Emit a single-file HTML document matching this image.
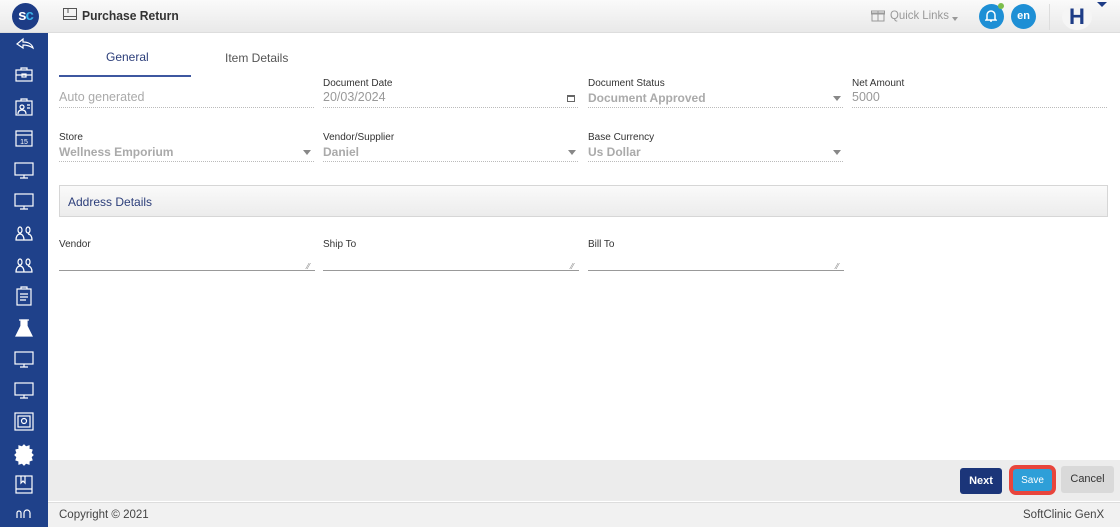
<!DOCTYPE html><html><head><style>
*{box-sizing:border-box;margin:0;padding:0}
body{width:1120px;height:527px;overflow:hidden;font-family:"Liberation Sans",sans-serif;background:#fff;position:relative}
.a{position:absolute}
.hdr{left:0;top:0;width:1120px;height:33px;background:linear-gradient(#fafafa,#e9e9e9);border-bottom:1px solid #ddd}
.side{left:0;top:33px;width:48px;height:494px;background:#1f418a}
.lbl{font-size:10px;color:#333}
.val{font-size:13px;color:#999}
.b{font-weight:bold;color:#aaa}
.dl{border-bottom:1px dotted #bbb;height:1px}
.car{width:0;height:0;border-left:4px solid transparent;border-right:4px solid transparent;border-top:5px solid #888}
</style></head><body>
<div class="a hdr"></div>
<div class="a" style="left:12px;top:3px;width:27px;height:27px;border-radius:50%;background:#1d3c86;color:#fff;font-weight:bold;font-size:15px;line-height:26px;text-align:center;letter-spacing:-1px">s<span style="color:#3ab0e8">c</span></div>
<svg class="a" style="left:63px;top:8px" width="14" height="12" viewBox="0 0 14 12"><rect x="0.5" y="0.5" width="13" height="11" fill="none" stroke="#555"/><line x1="0.5" y1="8.5" x2="13.5" y2="8.5" stroke="#555"/><line x1="5" y1="0.5" x2="5" y2="5" stroke="#555"/></svg>
<div class="a" style="left:82px;top:8px;font-size:13px;font-weight:bold;color:#333;transform:scaleX(.93);transform-origin:left">Purchase Return</div>
<svg class="a" style="left:871px;top:8px" width="14" height="14" viewBox="0 0 14 14"><rect x="1" y="5" width="12" height="8" fill="none" stroke="#999"/><rect x="0.5" y="3" width="13" height="3" fill="none" stroke="#999"/><line x1="7" y1="3" x2="7" y2="13" stroke="#999"/></svg>
<div class="a" style="left:890px;top:8px;font-size:12px;color:#999;transform:scaleX(.95);transform-origin:left">Quick Links</div>
<div class="a car" style="left:952px;top:17px;border-top-color:#999;border-width:4px 3px 0"></div>
<div class="a" style="left:979px;top:4px;width:25px;height:25px;border-radius:50%;background:#1e8fd5"></div>
<svg class="a" style="left:985px;top:9px" width="12" height="14" viewBox="0 0 12 14"><path d="M2 10V6a4 4 0 0 1 8 0v4l1 1H1z M5 12h2" fill="none" stroke="#fff" stroke-width="1.5"/></svg>
<div class="a" style="left:998px;top:3px;width:6px;height:6px;border-radius:50%;background:#7cbd4b"></div>
<div class="a" style="left:1011px;top:4px;width:25px;height:25px;border-radius:50%;background:#1e8fd5;color:#fff;font-size:11px;font-weight:bold;line-height:25px;text-align:center">en</div>
<div class="a" style="left:1049px;top:4px;width:1px;height:26px;background:#ddd"></div>
<div class="a" style="left:1062px;top:4px;width:30px;height:26px;border-radius:50%;background:#f5f5f5;color:#1d3c86;font-weight:bold;font-size:22px;line-height:26px;text-align:center">H</div>
<div class="a car" style="left:1097px;top:2px;border-top-color:#1d3c86;border-width:5px 5px 0"></div>
<div class="a side"></div>
<svg class="a" style="left:0;top:33px" width="48" height="494" viewBox="0 33 48 494" fill="none" stroke="#fff" stroke-width="1.2">
<path d="M17 44l6-5v3c5 0 9 2 10 6-3-2-6-3-10-3v3z"/>
<rect x="16" y="70" width="16" height="11"/><path d="M21 70v-2h6v2M16 75h16"/><rect x="22" y="74" width="4" height="3"/>
<rect x="16" y="101" width="16" height="14"/><path d="M21 101v-2h6v2M18 114c0-3 2-4 4-4s4 1 4 4M20 107a2 2 0 1 0 4 0a2 2 0 1 0-4 0M27 105h3M27 108h3"/>
<rect x="16" y="131" width="16" height="15"/><path d="M16 135h16"/><text x="24" y="144" font-size="7" fill="#fff" stroke="none" text-anchor="middle">15</text>
<rect x="15" y="163" width="18" height="12"/><path d="M24 175v3M20 178h8"/>
<rect x="15" y="194" width="18" height="12"/><path d="M24 206v3M20 209h8"/>
<path d="M16 240c0-4 2-6 4-6 2 0 4 2 4 6zM24 240h8c0-4-2-6-4-6M18 230a2 3 0 1 0 4 0a2 3 0 1 0-4 0M26 230a2 3 0 1 0 4 0a2 3 0 1 0-4 0"/>
<path d="M16 272c0-4 2-6 4-6 2 0 4 2 4 6zM24 272h8c0-4-2-6-4-6M18 262a2 3 0 1 0 4 0a2 3 0 1 0-4 0M26 262a2 3 0 1 0 4 0a2 3 0 1 0-4 0"/>
<rect x="17" y="289" width="14" height="16"/><path d="M21 289v-2h6v2M20 294h8M20 297h8M20 300h6"/>
<path d="M21 320v6l-5 10h16l-5-10v-6z" fill="#fff"/><path d="M19 320h10"/>
<rect x="15" y="352" width="18" height="12"/><path d="M24 364v3M20 367h8"/>
<rect x="15" y="383" width="18" height="12"/><path d="M24 395v3M20 398h8"/>
<rect x="15" y="413" width="18" height="17"/><rect x="18" y="416" width="12" height="11"/><circle cx="24" cy="421" r="2.5"/>
<path d="M24 445l2 2 3-1 0 3 3 1-1 3 2 2-2 2 1 3-3 1 0 3-3-1-2 2-2-2-3 1 0-3-3-1 1-3-2-2 2-2-1-3 3-1 0-3 3 1z" fill="#fff"/>
<rect x="16" y="476" width="16" height="17"/><path d="M16 489h16M21 476v7l2-2 2 2v-7"/>
<path d="M17 518v-5a2 2 0 0 1 4 0v5M24 518v-5a3 3 0 0 1 6 0v5" /></svg>
<div class="a" style="left:106px;top:50px;font-size:12px;color:#2c3e7a">General</div>
<div class="a" style="left:59px;top:75px;width:132px;height:2px;background:#3e57a0"></div>
<div class="a" style="left:225px;top:51px;font-size:12px;color:#555">Item Details</div>
<div class="a val" style="left:59px;top:90px;color:#aaa;font-size:12.5px">Auto generated</div>
<div class="a dl" style="left:59px;top:107px;width:255px"></div>
<div class="a lbl" style="left:323px;top:78px">Document Date</div>
<div class="a val" style="left:323px;top:90px;font-size:12.5px">20/03/2024</div>
<div class="a" style="left:567px;top:95px;width:8px;height:7px;border:1px solid #666;border-top-width:2px"></div>
<div class="a dl" style="left:323px;top:107px;width:255px"></div>
<div class="a lbl" style="left:588px;top:78px">Document Status</div>
<div class="a val b" style="left:588px;top:91px;font-size:12px">Document Approved</div>
<div class="a car" style="left:833px;top:96px"></div>
<div class="a dl" style="left:588px;top:107px;width:255px"></div>
<div class="a lbl" style="left:852px;top:78px">Net Amount</div>
<div class="a val" style="left:852px;top:90px;font-size:12.5px">5000</div>
<div class="a dl" style="left:852px;top:107px;width:255px"></div>
<div class="a lbl" style="left:59px;top:132px">Store</div>
<div class="a val b" style="left:59px;top:145px;font-size:12px">Wellness Emporium</div>
<div class="a car" style="left:303px;top:150px"></div>
<div class="a dl" style="left:59px;top:161px;width:255px"></div>
<div class="a lbl" style="left:323px;top:132px">Vendor/Supplier</div>
<div class="a val b" style="left:323px;top:145px;font-size:12px">Daniel</div>
<div class="a car" style="left:568px;top:150px"></div>
<div class="a dl" style="left:323px;top:161px;width:255px"></div>
<div class="a lbl" style="left:588px;top:132px">Base Currency</div>
<div class="a val b" style="left:588px;top:145px;font-size:12px">Us Dollar</div>
<div class="a car" style="left:833px;top:150px"></div>
<div class="a dl" style="left:588px;top:161px;width:255px"></div>
<div class="a" style="left:59px;top:185px;width:1049px;height:32px;border:1px solid #d6d6d6;background:linear-gradient(#fafafa,#ececec)"></div>
<div class="a" style="left:68px;top:195px;font-size:12px;color:#2c3e7a">Address Details</div>
<div class="a lbl" style="left:59px;top:239px">Vendor</div>
<div class="a lbl" style="left:323px;top:239px">Ship To</div>
<div class="a lbl" style="left:588px;top:239px">Bill To</div>
<div class="a" style="left:59px;top:270px;width:256px;height:1px;background:#999"></div>
<div class="a" style="left:323px;top:270px;width:256px;height:1px;background:#999"></div>
<div class="a" style="left:588px;top:270px;width:256px;height:1px;background:#999"></div>
<div class="a" style="left:307px;top:262px;font-size:8px;color:#888">⁄⁄</div>
<div class="a" style="left:571px;top:262px;font-size:8px;color:#888">⁄⁄</div>
<div class="a" style="left:836px;top:262px;font-size:8px;color:#888">⁄⁄</div>
<div class="a" style="left:48px;top:460px;width:1072px;height:41px;background:#ececec"></div>
<div class="a" style="left:960px;top:468px;width:42px;height:26px;background:#1b3579;border-radius:3px;color:#fff;font-size:11px;font-weight:bold;line-height:26px;text-align:center">Next</div>
<div class="a" style="left:1009px;top:465px;width:47px;height:30px;border-radius:7px;background:#e8453c"></div>
<div class="a" style="left:1013px;top:469px;width:39px;height:22px;background:#2e9fd8;border-radius:3px;color:#fff;font-size:10px;line-height:24px;text-align:center">Save</div>
<div class="a" style="left:1061px;top:466px;width:53px;height:27px;background:#d9d9d9;border-radius:3px;color:#333;font-size:11px;line-height:26px;text-align:center">Cancel</div>
<div class="a" style="left:48px;top:502px;width:1072px;height:25px;background:#f1f1f1;border-top:1px solid #ddd"></div>
<div class="a" style="left:59px;top:509px;font-size:11.5px;color:#444">Copyright © 2021</div>
<div class="a" style="left:1023px;top:509px;font-size:11.5px;color:#444">SoftClinic GenX</div>
</body></html>
